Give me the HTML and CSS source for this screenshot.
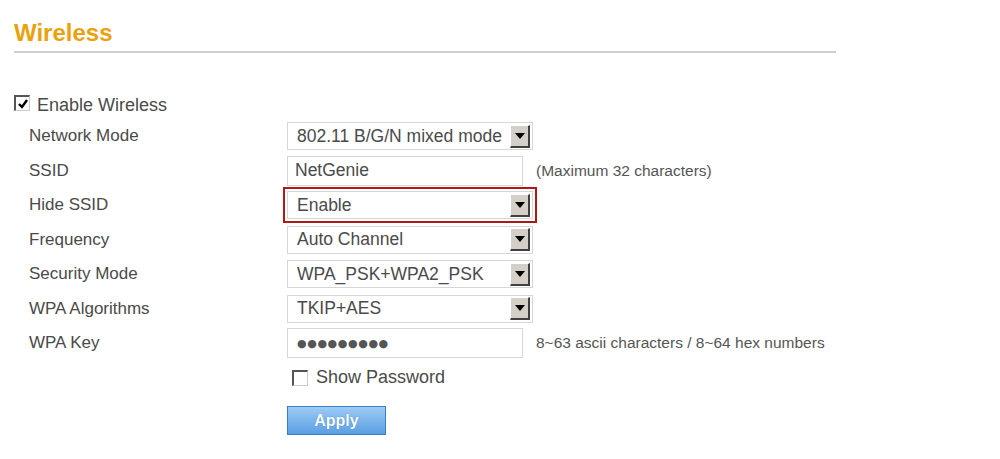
FILE: index.html
```html
<!DOCTYPE html>
<html lang="en">
<head>
    <meta charset="UTF-8">
    <title>Wireless</title>
    <link rel="stylesheet" href="styles.css">
</head>
<body>
    <div class="page">
        <h1 class="title">Wireless</h1>

        <div class="enable">
            <span class="check"><svg viewBox="0 0 12 12" width="12" height="12"><path d="M2 6 L5 9 L10 2" fill="none" stroke="#000" stroke-width="2.4"/></svg></span>
            Enable Wireless
        </div>

        <div class="form">
            <div class="label">Network Mode</div>
            <div class="field">
                <div class="select"><span class="value">802.11 B/G/N mixed mode</span><span class="arrow"></span></div>
            </div>

            <div class="label">SSID</div>
            <div class="field">
                <div class="input">NetGenie</div>
                <span class="hint">(Maximum 32 characters)</span>
            </div>

            <div class="label">Hide SSID</div>
            <div class="field">
                <div class="select marked"><span class="value">Enable</span><span class="arrow"></span></div>
            </div>

            <div class="label">Frequency</div>
            <div class="field">
                <div class="select"><span class="value">Auto Channel</span><span class="arrow"></span></div>
            </div>

            <div class="label">Security Mode</div>
            <div class="field">
                <div class="select"><span class="value">WPA_PSK+WPA2_PSK</span><span class="arrow"></span></div>
            </div>

            <div class="label">WPA Algorithms</div>
            <div class="field">
                <div class="select"><span class="value">TKIP+AES</span><span class="arrow"></span></div>
            </div>

            <div class="label">WPA Key</div>
            <div class="field">
                <div class="input dots">&#9679;&#9679;&#9679;&#9679;&#9679;&#9679;&#9679;&#9679;&#9679;</div>
                <span class="hint">8~63 ascii characters / 8~64 hex numbers</span>
            </div>

            <div class="label"></div>
            <div class="field">
                <span class="check small"></span>
                <span class="show">Show Password</span>
            </div>
        </div>

        <div class="actions">
            <button class="apply">Apply</button>
        </div>
    </div>
</body>
</html>
```

FILE: styles.css
```css
body {
    margin: 0;
    background: #fff;
    font-family: "Liberation Sans", Arial, sans-serif;
    color: #4a4a4a;
}
.page {
    padding: 19px 0 0 14px;
}
.title {
    width: 822px;
    margin: 0;
    padding-bottom: 4px;
    border-bottom: 2px solid #cfcfcf;
    font-size: 24px;
    line-height: 28px;
    font-weight: bold;
    color: #eba10e;
}
.enable {
    display: flex;
    align-items: center;
    gap: 7px;
    margin-top: 42px;
    height: 20px;
    font-size: 18px;
}
.check {
    display: inline-flex;
    align-items: center;
    justify-content: center;
    width: 13px;
    height: 13px;
    margin-top: -4px;
    background: #fff;
    border-top: 2px solid #555;
    border-left: 2px solid #555;
    border-right: 1px solid #ccc;
    border-bottom: 1px solid #ccc;
}
.form {
    display: grid;
    grid-template-columns: 258px auto;
    grid-auto-rows: 34.5px;
    margin-top: 4px;
    padding-left: 15px;
}
.label {
    display: flex;
    align-items: center;
    font-size: 17px;
    color: #4a4a4a;
}
.field {
    display: flex;
    align-items: center;
}
.select {
    display: flex;
    align-items: center;
    justify-content: space-between;
    box-sizing: border-box;
    width: 246px;
    height: 28px;
    padding: 0 2px 0 9px;
    border: 1px solid #d6d6d6;
    background: #fff;
    font-size: 17.5px;
    color: #4a4a4a;
}
.select.marked {
    outline: 2px solid #b01818;
    outline-offset: 2px;
}
.arrow {
    position: relative;
    box-sizing: border-box;
    width: 20px;
    height: 23px;
    background: #d4d0c8;
    border-top: 1px solid #fff;
    border-left: 1px solid #fff;
    border-right: 2px solid #404040;
    border-bottom: 2px solid #404040;
}
.arrow::after {
    content: "";
    position: absolute;
    left: 4px;
    top: 7px;
    border-left: 5px solid transparent;
    border-right: 5px solid transparent;
    border-top: 6px solid #000;
}
.input {
    display: flex;
    align-items: center;
    box-sizing: border-box;
    width: 236px;
    height: 30px;
    padding-left: 7px;
    border: 1px solid #d6d6d6;
    font-size: 17.5px;
    color: #4a4a4a;
}
.dots {
    padding-left: 9px;
    font-family: "DejaVu Sans", sans-serif;
    font-size: 11px;
    letter-spacing: 0.6px;
    color: #555;
}
.hint {
    margin-left: 13px;
    font-size: 15.5px;
    color: #555;
}
.check.small {
    margin: 0 8px 0 5px;
}
.show {
    font-size: 18px;
}
.actions {
    margin-top: 11px;
    padding-left: 273px;
}
.apply {
    width: 99px;
    height: 29px;
    border: 1px solid #3a7dc9;
    background: linear-gradient(#9ccbf6, #5c9fe3);
    color: #fff;
    font-family: "Liberation Sans", Arial, sans-serif;
    font-size: 16px;
    font-weight: bold;
    text-shadow: 0 0 1px #2a6cb8;
    cursor: pointer;
}
```
